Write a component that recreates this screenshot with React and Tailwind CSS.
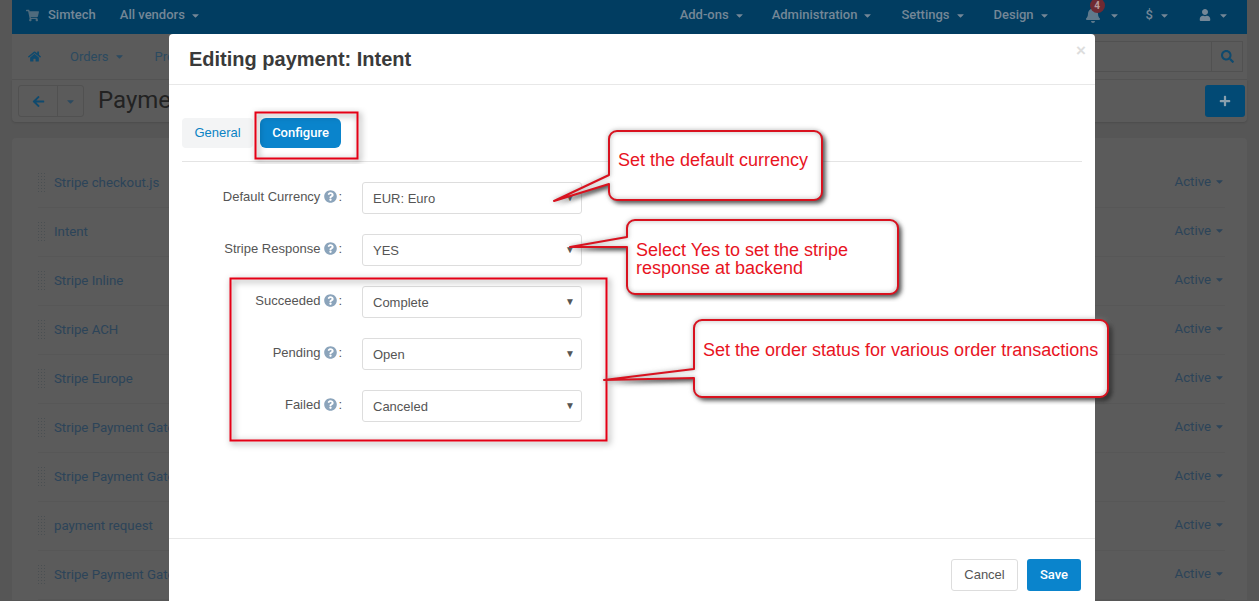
import React from "react";
import { FaShoppingCart, FaHome, FaBell, FaUser, FaSearch, FaArrowLeft, FaPlus, FaQuestionCircle, FaCaretDown } from "react-icons/fa";

const navLinks = [
  { label: "Add-ons", cls: "ml-auto" },
  { label: "Administration", cls: "ml-[27px]" },
  { label: "Settings", cls: "ml-[28px]" },
  { label: "Design", cls: "ml-[28px]" },
];

const payments = [
  "Stripe checkout.js",
  "Intent",
  "Stripe Inline",
  "Stripe ACH",
  "Stripe Europe",
  "Stripe Payment Gateway",
  "Stripe Payment Gateway",
  "payment request",
  "Stripe Payment Gateway",
];

const fields = [
  { label: "Default Currency", value: "EUR: Euro" },
  { label: "Stripe Response", value: "YES" },
  { label: "Succeeded", value: "Complete" },
  { label: "Pending", value: "Open" },
  { label: "Failed", value: "Canceled" },
];

const callouts = [
  "M617 131H814a8 8 0 0 1 8 8V192a8 8 0 0 1-8 8H617a8 8 0 0 1-8-8V184L554 201L609 175V139a8 8 0 0 1 8-8Z",
  "M635 220H890a8 8 0 0 1 8 8V286a8 8 0 0 1-8 8H635a8 8 0 0 1-8-8V247L570 247L627 237V228a8 8 0 0 1 8-8Z",
  "M702 320H1100a8 8 0 0 1 8 8V389a8 8 0 0 1-8 8H702a8 8 0 0 1-8-8V378L604 380L694 369V328a8 8 0 0 1 8-8Z",
];

const Caret = ({ className }) => <FaCaretDown className={"text-[11px] " + className} />;

const Grip = () => (
  <div className="w-[8px] h-[20px] mr-[8px] grid grid-cols-3 gap-[1.5px] overflow-hidden">
    {Array.from({ length: 21 }).map((_, i) => (
      <span key={i} className="w-[1px] h-[1px] bg-[#4a4f52]"></span>
    ))}
  </div>
);

const Page = () => (
  <div className="h-full px-[12px] text-[13px] bg-[#565656] font-[Roboto,sans-serif]">
    <div className="h-[34px] bg-[#013d61] flex items-center pb-[4px] pl-[14px] pr-[18px] text-[#748797] font-medium">
      <FaShoppingCart className="text-[13px] text-[#4f6b7d]" />
      <span className="ml-[9px]">Simtech</span>
      <span className="ml-[24px]">All vendors</span>
      <Caret className="ml-[5px]" />
      {navLinks.map((n) => (
        <React.Fragment key={n.label}>
          <span className={n.cls}>{n.label}</span>
          <Caret className="ml-[5px]" />
        </React.Fragment>
      ))}
      <div className="relative ml-[35px]">
        <FaBell className="text-[16px] text-[#5f7a8c]" />
        <span className="absolute -top-[9px] left-[5px] w-[15px] h-[15px] rounded-full bg-[#6f2a32] text-[10px] text-[#b89a9a] font-bold flex items-center justify-center">4</span>
      </div>
      <Caret className="ml-[8px]" />
      <span className="ml-[26px]">$</span>
      <Caret className="ml-[6px]" />
      <FaUser className="ml-[29px] text-[12px]" />
      <Caret className="ml-[7px]" />
    </div>
    <div className="h-[46px] bg-[#5b5b5b] border-b border-[#545454] flex items-center pl-[16px] pr-[4px]">
      <FaHome className="text-[#0f4a6e] text-[13px]" />
      <span className="ml-[29px] text-[#2b4a60]">Orders</span>
      <Caret className="ml-[5px] text-[#2b4a60]" />
      <span className="ml-[30px] text-[#2b4a60]">Pro</span>
      <div className="ml-[400px] flex-1 h-[31px] border border-[#515151] flex justify-end">
        <div className="h-full w-[31px] border-l border-[#515151] flex items-center justify-center">
          <FaSearch className="text-[#0f4a6e] text-[13px]" />
        </div>
      </div>
    </div>
    <div className="h-[42px] bg-[#5b5b5b] rounded-b flex items-center pl-[6px] pr-[2px] shadow-[0_1px_2px_rgba(0,0,0,0.12)]">
      <div className="flex h-[32px] border border-[#515151] rounded-[3px]">
        <div className="w-[39px] flex items-center justify-center border-r border-[#515151]">
          <FaArrowLeft className="text-[#0f4a6e] text-[13px]" />
        </div>
        <div className="w-[25px] flex items-center justify-center">
          <Caret className="text-[#2b4a60]" />
        </div>
      </div>
      <span className="ml-[14px] -mt-[2px] text-[24px] text-[#222]">Payment methods</span>
      <div className="ml-auto w-[40px] h-[32px] rounded-[3px] bg-[#024a75] flex items-center justify-center">
        <FaPlus className="text-[#8aa0ae] text-[12px]" />
      </div>
    </div>
    <div className="mt-[16px] bg-[#5b5b5b] rounded-t pt-[21px] pl-[26px] pr-[22px] text-[13.25px]">
      {payments.map((p, i) => (
        <div key={i} className="h-[49px] flex items-center border-b border-[#575757] pb-[1px]">
          <Grip />
          <span className="text-[#2c4459]">{p}</span>
          <span className="ml-auto -mt-[2px] text-[#2c4459]">Active</span>
          <Caret className="ml-[3px] -mt-[2px] text-[#2c4459]" />
        </div>
      ))}
    </div>
  </div>
);

const Field = ({ label, value }) => (
  <div className="flex items-start h-[32px] mb-[20px]">
    <div className="w-[160px] flex items-center justify-end text-[#555] h-[29px]">
      {label}
      <FaQuestionCircle className="ml-[4px] text-[13px] text-[#8ba4bb]" />
      <span className="ml-[1px]">:</span>
    </div>
    <div className="ml-[20px] w-[220px] h-[32px] border border-[#ddd] rounded-[3px] bg-white flex items-center justify-between pl-[10px] pr-[6px] text-[#555]">
      <span className="pt-[1px]">{value}</span>
      <span className="text-[10px] text-[#555] -mt-[1px]">▼</span>
    </div>
  </div>
);

const Modal = () => (
  <div className="absolute left-[169px] top-[34px] w-[926px] h-[567px] bg-white rounded-t-[4px] flex flex-col text-[13px] font-['Liberation_Sans',sans-serif]">
    <div className="relative h-[51px] border-b border-[#e8e8e8] pl-[20px] flex items-center">
      <h3 className="text-[20px] font-bold text-[#3a3a3a]">Editing payment: Intent</h3>
      <span className="absolute right-[9px] top-[4px] text-[17px] font-bold text-[#ddd]">×</span>
    </div>
    <div className="flex-1 px-[13px] pt-[33px]">
      <div className="flex gap-[7px] pb-[13px] border-b border-[#e4e4e4]">
        <div className="w-[71px] h-[30px] bg-[#f3f4f5] rounded-[4px] flex items-center justify-center text-[#0b83c4]">General</div>
        <div className="w-[81px] h-[30px] bg-[#0a84cc] rounded-[6px] flex items-center justify-center text-white font-medium font-[Roboto,sans-serif]">Configure</div>
      </div>
      <div className="mt-[20px]">
        {fields.map((f) => (
          <Field key={f.label} label={f.label} value={f.value} />
        ))}
      </div>
    </div>
    <div className="h-[63px] border-t border-[#e8e8e8] flex items-start justify-end gap-[9px] pt-[20px] pr-[14px]">
      <div className="w-[67px] h-[32px] border border-[#ddd] rounded-[3px] flex items-center justify-center text-[#555]">Cancel</div>
      <div className="w-[54px] h-[32px] bg-[#0a84cc] rounded-[3px] flex items-center justify-center text-white font-medium font-[Roboto,sans-serif]">Save</div>
    </div>
  </div>
);

const Annotations = () => (
  <>
    <svg className="absolute left-0 top-0" width="1259" height="601" fill="none">
      <defs>
        <filter id="boxShadow" x="-10%" y="-10%" width="120%" height="120%">
          <feDropShadow dx="2" dy="2" stdDeviation="3" floodColor="#000" floodOpacity="0.5" />
        </filter>
        <filter id="calloutShadow" x="-10%" y="-10%" width="120%" height="120%">
          <feDropShadow dx="3" dy="3" stdDeviation="2.5" floodColor="#000" floodOpacity="0.8" />
        </filter>
        <filter id="innerGlow" x="-10%" y="-10%" width="120%" height="120%">
          <feGaussianBlur stdDeviation="2" />
        </filter>
      </defs>
      <rect x="255.5" y="112.5" width="102" height="46" stroke="#e30613" strokeWidth="2" filter="url(#boxShadow)" />
      <rect x="230.5" y="278.5" width="376" height="162" stroke="#e30613" strokeWidth="2" filter="url(#boxShadow)" />
      {callouts.map((d, i) => (
        <g key={i}>
          <path d={d} fill="#fff" filter="url(#calloutShadow)" />
          <path d={d} stroke="#8a8a8a" strokeOpacity="0.55" strokeWidth="3" filter="url(#innerGlow)" />
          <path d={d} stroke="#d8121f" strokeWidth="2" strokeLinejoin="round" />
        </g>
      ))}
    </svg>
    <div className="absolute left-[618px] top-[150px] text-[18px] leading-[21px] text-[#e8141f] font-['Liberation_Sans',sans-serif]">Set the default currency</div>
    <div className="absolute left-[636px] top-[241px] text-[18px] leading-[18px] text-[#e8141f] font-['Liberation_Sans',sans-serif]">
      Select Yes to set the stripe<br />response at backend
    </div>
    <div className="absolute left-[703px] top-[340px] text-[18px] leading-[21px] text-[#e8141f] font-['Liberation_Sans',sans-serif]">Set the order status for various order transactions</div>
  </>
);

export default function App() {
  return (
    <div className="relative w-[1259px] h-[601px] overflow-hidden">
      <Page />
      <Modal />
      <Annotations />
    </div>
  );
}
